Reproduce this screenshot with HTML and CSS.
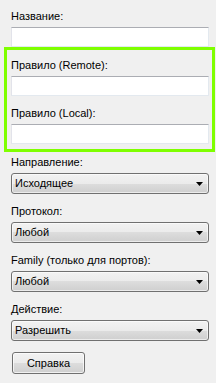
FILE: index.html
```html
<!DOCTYPE html>
<html>
<head>
<meta charset="utf-8">
<link rel="stylesheet" href="styles.css">
</head>
<body>
<div class="form">
  <div class="field">
    <span class="lbl">Название:</span>
    <div class="textbox"></div>
  </div>
  <div class="rules">
    <div class="field">
      <span class="lbl">Правило (Remote):</span>
      <div class="textbox"></div>
    </div>
    <div class="field">
      <span class="lbl">Правило (Local):</span>
      <div class="textbox"></div>
    </div>
  </div>
  <div class="selects">
    <div class="field">
      <span class="lbl">Направление:</span>
      <div class="combo"><span>Исходящее</span><svg class="arrow" width="7" height="4" viewBox="0 0 7 4"><path d="M0 0H7L3.5 4Z" fill="#000"/></svg></div>
    </div>
    <div class="field">
      <span class="lbl">Протокол:</span>
      <div class="combo"><span>Любой</span><svg class="arrow" width="7" height="4" viewBox="0 0 7 4"><path d="M0 0H7L3.5 4Z" fill="#000"/></svg></div>
    </div>
    <div class="field">
      <span class="lbl">Family (только для портов):</span>
      <div class="combo"><span>Любой</span><svg class="arrow" width="7" height="4" viewBox="0 0 7 4"><path d="M0 0H7L3.5 4Z" fill="#000"/></svg></div>
    </div>
    <div class="field">
      <span class="lbl">Действие:</span>
      <div class="combo"><span>Разрешить</span><svg class="arrow" width="7" height="4" viewBox="0 0 7 4"><path d="M0 0H7L3.5 4Z" fill="#000"/></svg></div>
    </div>
  </div>
  <div class="button">Справка</div>
</div>
</body>
</html>
```
FILE: styles.css
```css
html, body {
  margin: 0;
  padding: 0;
  background: #f0f0f0;
}
body {
  font-family: "Liberation Sans", Arial, sans-serif;
  font-size: 11px;
  line-height: 13px;
  color: #000;
}
.form {
  display: flex;
  flex-direction: column;
  align-items: flex-start;
  padding: 10px 7px 0 11px;
}
.field {
  display: flex;
  flex-direction: column;
}
.lbl {
  display: block;
  height: 13px;
  margin-bottom: 4px;
  white-space: nowrap;
}
.textbox {
  box-sizing: border-box;
  width: 198px;
  height: 20px;
  background: #fff;
  border: 1px solid #e3e9ef;
  border-top-color: #abadb3;
  border-left-color: #e2e3ea;
}
.rules {
  box-sizing: border-box;
  width: 211px;
  margin-left: -7px;
  border: 3px solid #7fff00;
  padding: 9px 3px 5px 4px;
  display: flex;
  flex-direction: column;
  gap: 11px;
}
.selects {
  margin-top: 4px;
  display: flex;
  flex-direction: column;
  gap: 11px;
}
.combo {
  box-sizing: border-box;
  width: 198px;
  height: 21px;
  border: 1px solid #707070;
  border-radius: 3px;
  background: linear-gradient(#f2f2f2 0%, #ebebeb 50%, #dddddd 50%, #cfcfcf 100%);
  box-shadow: inset 0 0 0 1px rgba(255,255,255,0.6);
  display: flex;
  align-items: center;
  justify-content: space-between;
  padding: 0 5px 0 3px;
}
.arrow {
  display: block;
}
.button {
  box-sizing: border-box;
  margin-top: 11px;
  margin-left: 1px;
  width: 73px;
  height: 22px;
  border: 1px solid #707070;
  border-radius: 3px;
  background: linear-gradient(#f2f2f2 0%, #ebebeb 50%, #dddddd 50%, #cfcfcf 100%);
  box-shadow: inset 0 0 0 1px rgba(255,255,255,0.7);
  display: flex;
  align-items: center;
  justify-content: center;
}
```
